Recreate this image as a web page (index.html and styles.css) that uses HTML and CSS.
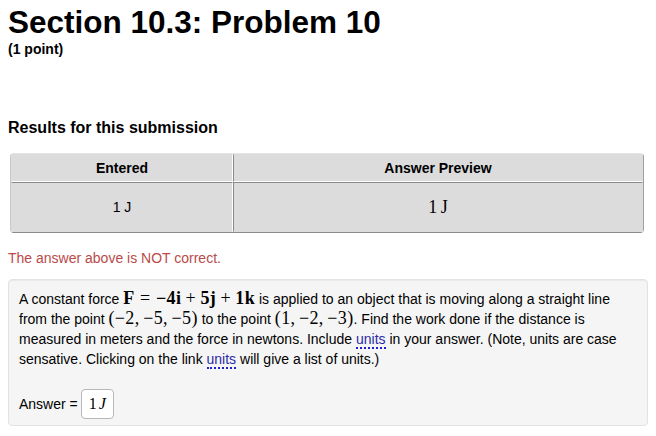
FILE: index.html
```html
<!DOCTYPE html>
<html>
<head>
<meta charset="utf-8">
<link rel="stylesheet" href="styles.css">
</head>
<body>
<h1 class="title">Section 10.3: Problem 10</h1>
<div class="points">(1 point)</div>
<h2 class="results">Results for this submission</h2>
<table class="attempt">
  <tr>
    <th class="col-entered">Entered</th>
    <th class="col-preview">Answer Preview</th>
  </tr>
  <tr>
    <td class="entered">1 J</td>
    <td class="preview"><span class="math">1<span class="thin"></span>J</span></td>
  </tr>
</table>
<div class="error">The answer above is NOT correct.</div>
<div class="well">
  <div class="problem">A constant force <span class="math b">F<span class="rel">=</span>−4i<span class="bin">+</span>5j<span class="bin">+</span>1k</span> is applied to an object that is moving along a straight line<br>from the point <span class="math">(−2,<span class="thin"></span>−5,<span class="thin"></span>−5)</span> to the point <span class="math">(1,<span class="thin"></span>−2,<span class="thin"></span>−3)</span>. Find the work done if the distance is<br>measured in meters and the force in newtons. Include <a class="link">units</a> in your answer. (Note, units are case<br>sensative. Clicking on the link <a class="link">units</a> will give a list of units.)</div>
  <div class="answer-row">Answer = <span class="answer-box"><span class="num">1</span><span class="it">J</span></span></div>
</div>
</body>
</html>
```
FILE: styles.css
```css
body {
  margin: 0;
  padding: 4px 8px 0;
  font-family: "Liberation Sans", Arial, sans-serif;
  color: #000;
  background: #fff;
}
.title {
  margin: 0;
  font-size: 31.5px;
  line-height: 36px;
  font-weight: bold;
}
.points {
  margin-top: 1px;
  font-size: 14px;
  line-height: 16px;
  font-weight: bold;
}
.results {
  margin: 61px 0 0;
  font-size: 16px;
  line-height: 20px;
  font-weight: bold;
}
.attempt {
  margin: 15px 0 0 2px;
  width: 634px;
  border-collapse: separate;
  border-spacing: 0;
  border: 1px solid;
  border-color: #e4e4e4 #a0a0a0 #8a8a8a #c8c8c8;
  border-radius: 4px;
  background: #dcdcdc;
  font-family: "Liberation Sans", Arial, sans-serif;
}
.attempt th, .attempt td {
  text-align: center;
  border-style: solid;
  border-width: 1px;
  border-color: #8a8a8a #fff #fff #8a8a8a;
  padding: 0;
}
.attempt th {
  height: 26px;
  font-size: 14px;
  font-weight: bold;
}
.col-entered { width: 220px; }
.attempt tr:first-child th { border-top-color: #dcdcdc; }
.attempt tr > :first-child { border-left-color: #dcdcdc; }
.attempt tr > :last-child { border-right-color: #dcdcdc; }
.attempt tr:last-child td { border-bottom-color: #dcdcdc; height: 48px; }
.entered { font-size: 14px; font-family: "Liberation Sans", Arial, sans-serif; }
.preview .math { font-size: 18px; letter-spacing: 0; }
.math {
  font-family: "Liberation Serif", "Times New Roman", serif;
  font-size: 18px;
  line-height: 1;
  letter-spacing: 0.02em;
}
.b { font-weight: bold; }
.rel { display: inline-block; margin: 0 0.3em; font-weight: normal; }
.bin { display: inline-block; margin: 0 0.24em; font-weight: normal; }
.thin { display: inline-block; width: 0.2em; }
.error {
  margin-top: 15px;
  font-size: 14px;
  line-height: 20px;
  color: #b94a48;
}
.well {
  margin-top: 11px;
  background: #f5f5f5;
  border: 1px solid #e3e3e3;
  border-radius: 4px;
  box-shadow: inset 0 1px 1px rgba(0,0,0,0.05);
  padding: 9px 10px 6px;
  font-size: 14px;
  line-height: 20px;
}
.problem { white-space: nowrap; }
.link {
  color: #2a2aa8;
  text-decoration: none;
  border-bottom: 2px dotted #2020d0;
}
.answer-row {
  margin-top: 20px;
  display: flex;
  align-items: center;
  gap: 3px;
}
.answer-box {
  display: inline-flex;
  align-items: center;
  height: 28px;
  padding: 0 7px;
  background: #fff;
  border: 1px solid #b8b8b8;
  border-radius: 4px;
  font-family: "Liberation Serif", "Times New Roman", serif;
  font-size: 16px;
}
.answer-box .it { font-style: italic; margin-left: 2px; }
```
